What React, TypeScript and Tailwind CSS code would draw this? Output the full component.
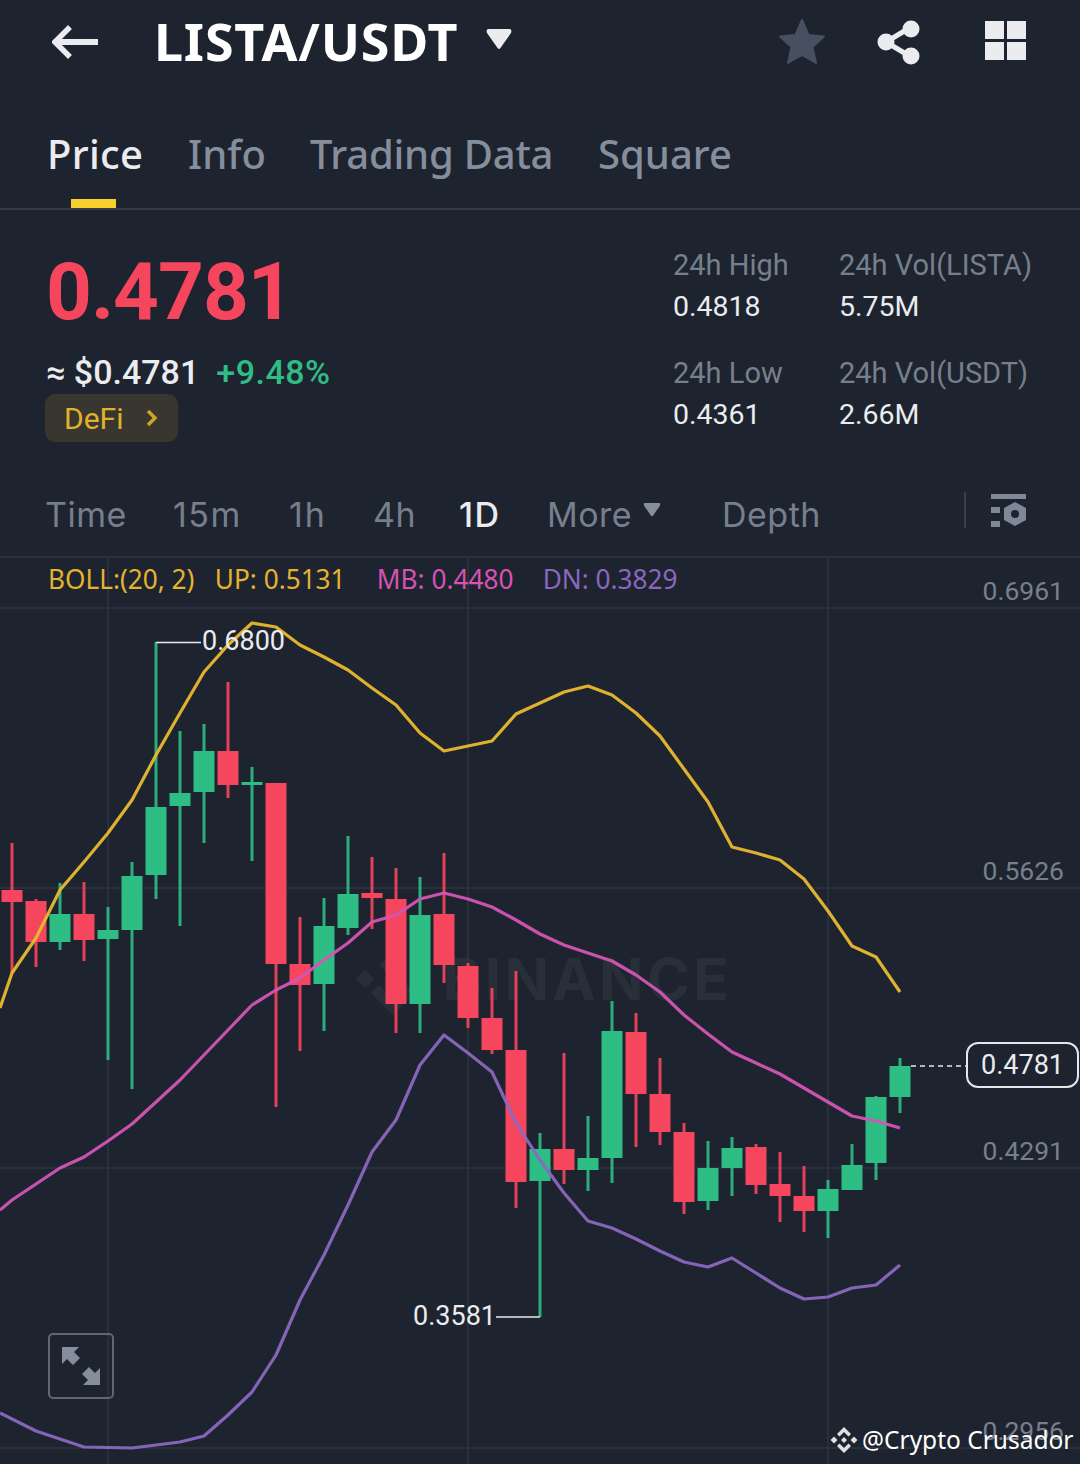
const R = "#f6465d";
const G = "#2ebd85";

// x index from 0 → 12 + 24*i; [wickTop, wickBottom, bodyTop, bodyBottom, up]
const candles: [number, number, number, number, number][] = [
  [843, 973, 890, 902, 0],
  [899, 967, 901, 942, 0],
  [883, 950, 914, 942, 1],
  [882, 961, 914, 940, 0],
  [907, 1060, 930, 939, 1],
  [862, 1089, 876, 930, 1],
  [642, 899, 807, 875, 1],
  [731, 926, 793, 806, 1],
  [724, 843, 751, 792, 1],
  [682, 798, 751, 785, 0],
  [767, 861, 782, 785, 1],
  [783, 1107, 783, 964, 0],
  [917, 1051, 964, 985, 0],
  [898, 1031, 926, 984, 1],
  [836, 935, 894, 928, 1],
  [857, 929, 893, 898, 0],
  [868, 1033, 899, 1004, 0],
  [877, 1033, 915, 1004, 1],
  [853, 983, 914, 965, 0],
  [963, 1028, 966, 1018, 0],
  [988, 1054, 1018, 1050, 0],
  [971, 1208, 1050, 1182, 0],
  [1133, 1317, 1149, 1181, 1],
  [1053, 1184, 1149, 1170, 0],
  [1116, 1191, 1158, 1170, 1],
  [1001, 1183, 1031, 1158, 1],
  [1013, 1147, 1032, 1094, 0],
  [1058, 1145, 1094, 1132, 0],
  [1123, 1214, 1132, 1202, 0],
  [1141, 1210, 1168, 1201, 1],
  [1137, 1196, 1148, 1168, 1],
  [1144, 1194, 1147, 1185, 0],
  [1152, 1222, 1184, 1196, 0],
  [1166, 1232, 1196, 1211, 0],
  [1180, 1238, 1189, 1211, 1],
  [1144, 1190, 1165, 1190, 1],
  [1096, 1180, 1097, 1163, 1],
  [1058, 1113, 1066, 1097, 1],
];

const yellow =
  "0,1008 12,973 36,938 60,890 84,862 108,833 132,800 156,755 180,713 204,672 228,645 252,623 276,627 300,645 324,657 348,670 372,688 396,705 420,733 444,751 468,746 492,741 516,714 540,703 564,692 588,686 612,695 636,713 660,736 684,769 708,802 732,847 756,853 780,860 804,879 828,911 852,946 876,957 900,992";
const magenta =
  "0,1210 12,1200 36,1184 60,1168 84,1157 108,1141 132,1124 156,1102 180,1080 204,1055 228,1030 252,1005 276,990 300,978 324,960 348,943 372,922 396,915 420,899 444,893 468,899 492,907 516,920 540,934 564,945 588,953 612,961 636,975 660,992 684,1015 708,1034 732,1052 756,1063 780,1074 804,1088 828,1102 852,1116 876,1121 900,1128";
const purple =
  "0,1413 36,1431 84,1447 132,1448 180,1442 204,1436 228,1415 252,1392 276,1355 300,1300 324,1255 348,1205 372,1152 396,1120 420,1065 444,1035 468,1053 492,1072 516,1123 540,1160 564,1193 588,1221 612,1228 636,1239 660,1251 684,1262 708,1267 732,1258 756,1273 780,1288 804,1299 828,1297 852,1288 876,1285 900,1265";

function Chart() {
  return (
    <svg className="absolute left-0 top-0" width={1080} height={907} viewBox="0 557 1080 907">
      <g stroke="#2f3540" strokeWidth={1.5}>
        {[608, 888, 1168, 1448].map((y) => (
          <line key={y} x1={0} x2={1080} y1={y} y2={y} />
        ))}
        {[108, 468, 828].map((x) => (
          <line key={x} x1={x} x2={x} y1={557} y2={1464} />
        ))}
      </g>
      <g fill="#292f39">
        <path d="M393 951l14 14-8 8-6-6-6 6-8-8zM365 970l9 9-9 9-9-9zM393 970l9 9-9 9-9-9zM420 970l9 9-9 9-9-9zM379 985l14 14 14-14 8 8-22 22-22-22z" />
      </g>
      {candles.map((c, i) => {
        const x = 12 + 24 * i;
        const col = c[4] ? G : R;
        return (
          <g key={i}>
            <rect x={x - 1.5} y={c[0]} width={3} height={c[1] - c[0]} fill={col} opacity={0.9} />
            <rect x={x - 10.5} y={c[2]} width={21} height={c[3] - c[2]} fill={col} />
          </g>
        );
      })}
      <g fill="none" strokeWidth={3.2} strokeLinejoin="round">
        <polyline points={yellow} stroke="#e9b92e" strokeOpacity={0.95} />
        <polyline points={magenta} stroke="#d455b5" strokeOpacity={0.95} />
        <polyline points={purple} stroke="#8b68c0" strokeOpacity={0.95} />
      </g>
      <g fill="none" stroke="#e8eaee" strokeWidth={1.5}>
        <polyline points="156,642.5 201,642.5" />
        <polyline points="496,1317 540,1317" />
        <line x1={911} x2={966} y1={1066} y2={1066} strokeDasharray="5 4" />
      </g>
    </svg>
  );
}

function Caret({ className }: { className: string }) {
  return (
    <svg className={className} viewBox="0 0 28 22">
      <path d="M1 2q0-2 2-2h22q2 0 2 2t-1 3L15.5 20q-1.500 2-3 0L2 5q-1-1-1-3z" fill="currentColor" />
    </svg>
  );
}

export default function App() {
  return (
    <div className="w-[1080px] h-[1464px] overflow-hidden bg-[#1e242f] text-[#eaecef] font-['Noto_Sans',sans-serif]">
      {/* Header */}
      <div className="h-[84px] flex items-center">
        <svg className="ml-[52px] w-[46px] h-[36px]" viewBox="0 0 46 36" fill="none">
          <path d="M18 3L3 18l15 15" stroke="#eaecef" strokeWidth={5.500} />
          <path d="M4 18h42" stroke="#eaecef" strokeWidth={6} />
        </svg>
        <div className="ml-[56px] -mt-[2px] w-[331px] font-bold text-[52px] leading-none tracking-[0.8px] text-white whitespace-nowrap">
          LISTA/USDT
        </div>
        <Caret className="w-[28px] h-[21px] -mt-[6px] text-[#eaecef]" />
        <svg className="ml-[266px] w-[46px] h-[46px]" viewBox="0 0 46 46">
          <path d="M23 1l6.500 15 15.500 1.500-11.500 10.500 3.500 16L23 36l-14 8 3.500-16L1 17.500 16.500 16z" fill="#475061" stroke="#475061" strokeLinejoin="round" strokeWidth={2} />
        </svg>
        <svg className="ml-[51px] w-[46px] h-[46px]" viewBox="0 0 46 46">
          <path d="M35 8L10 23l25 15" stroke="#eaecef" strokeWidth={5} fill="none" />
          <circle cx={35} cy={10} r={8.500} fill="#eaecef" />
          <circle cx={10} cy={23} r={8.500} fill="#eaecef" />
          <circle cx={35} cy={37} r={8.500} fill="#eaecef" />
        </svg>
        <div className="ml-[63px] -mt-[4px] grid grid-cols-2 gap-[3px] w-[41px]">
          <div className="h-[18px] w-[19px] bg-[#eaecef]" />
          <div className="h-[18px] w-[19px] bg-[#eaecef]" />
          <div className="h-[18px] w-[19px] bg-[#eaecef]" />
          <div className="h-[18px] w-[19px] bg-[#eaecef]" />
        </div>
      </div>

      {/* Tabs */}
      <div className="h-[126px] border-b-2 border-[#343a45] flex pl-[47px] items-start text-[40px] leading-none text-[#848e9c] font-medium">
        <div className="mt-[50px] flex flex-col items-start w-[96px]">
          <span className="text-[#eaecef] tracking-[0.3px]">Price</span>
          <div className="ml-[24px] mt-[25px] w-[45px] h-[9px] bg-[#f7d02e]" />
        </div>
        <span className="mt-[50px] ml-[45px] w-[77px] block">Info</span>
        <span className="mt-[50px] ml-[45px] w-[243px] block whitespace-nowrap tracking-[-0.2px]">Trading Data</span>
        <span className="mt-[50px] ml-[45px] block">Square</span>
      </div>

      {/* Stats */}
      <div className="h-[260px] flex font-['Roboto',sans-serif]">
        <div className="w-[673px] pl-[45px] flex flex-col items-start">
          <div className="mt-[36px] pl-[1px] text-[80px] leading-[92px] font-bold text-[#f6465d] tracking-[-1px]">0.4781</div>
          <div className="mt-[14px] pl-[1px] flex items-baseline text-[34px] leading-[40px] font-medium">
            <span className="text-[#eaecef]">≈ $0.4781</span>
            <span className="ml-[17px] text-[#2ebd85] tracking-[0.5px]">+9.48%</span>
          </div>
          <div className="mt-[2px] w-[133px] h-[48px] rounded-[10px] bg-[#38362e] flex items-center pl-[19px] text-[#e0b22a] text-[30px]">
            DeFi
            <svg className="ml-[22px] w-[14px] h-[18px]" viewBox="0 0 14 18" fill="none">
              <path d="M3 2l7 7-7 7" stroke="#d0a224" strokeWidth={3.5} />
            </svg>
          </div>
        </div>
        <div className="pt-[37px] grid grid-cols-[166px_auto] grid-rows-[108px_108px] text-[29px] leading-[36px] text-[#eaecef]">
          {[
            ["24h High", "0.4818"],
            ["24h Vol(LISTA)", "5.75M"],
            ["24h Low", "0.4361"],
            ["24h Vol(USDT)", "2.66M"],
          ].map(([a, b]) => (
            <div key={a} className="flex flex-col gap-[6px]">
              <span className="text-[#767f8d]">{a}</span>
              <span className="text-[28.5px]">{b}</span>
            </div>
          ))}
        </div>
      </div>

      {/* Intervals */}
      <div className="h-[88px] pt-[2px] border-b-2 border-[#2b313b] flex items-center font-['Inter',sans-serif] text-[34px] text-[#767f8d] pl-[45px] tracking-[0.5px]">
        <span className="w-[128px]">Time</span>
        <span className="w-[116px] tracking-[1.5px]">15m</span>
        <span className="w-[84px] tracking-[2px]">1h</span>
        <span className="w-[86px]">4h</span>
        <span className="w-[88px] text-[#eaecef] font-medium tracking-[1.5px]">1D</span>
        <span className="w-[95px]">More</span>
        <Caret className="w-[20px] h-[14px] -mt-[8px] text-[#848e9c]" />
        <span className="ml-[60px] w-[242px]">Depth</span>
        <div className="w-[2px] h-[36px] -mt-[8px] bg-[#3a404b]" />
        <svg className="ml-[24px] -mt-[4px] w-[38px] h-[38px]" viewBox="0 0 38 38" fill="#7f8896">
          <rect x={1} y={1} width={35} height={5} />
          <rect x={1} y={14} width={9} height={6} />
          <rect x={1} y={28} width={9} height={6} />
          <path fillRule="evenodd" d="M25 9l11 6v12l-11 6-11-6V15zM25 17a4 4 0 100 8 4 4 0 000-8z" />
        </svg>
      </div>

      {/* Chart */}
      <div className="relative h-[907px] -mt-[1px]">
        <div className="absolute left-[443px] top-[387px] text-[58px] leading-[70px] font-bold font-['Inter',sans-serif] text-[#292f39] tracking-[3.5px]">
          BINANCE
        </div>
        <Chart />
        <div className="absolute left-[48px] top-[4px] flex text-[27px] leading-[36px] whitespace-nowrap scale-x-[0.97] origin-left">
          <span className="text-[#e5b32e] w-[172px]">BOLL:(20, 2)</span>
          <span className="text-[#e5b32e] w-[167px]">UP: 0.5131</span>
          <span className="text-[#d653b4] w-[171px]">MB: 0.4480</span>
          <span className="text-[#8b66bf]">DN: 0.3829</span>
        </div>
        {[
          ["0.6961", 16],
          ["0.5626", 296],
          ["0.4291", 576],
          ["0.2956", 856],
        ].map(([t, y]) => (
          <div key={t} className="absolute right-[16px] text-[26.5px] leading-[36px] font-['Roboto',sans-serif] text-[#767f8d]" style={{ top: Number(y) }}>
            {t}
          </div>
        ))}
        <div className="absolute left-[202px] top-[66px] text-[27px] leading-[36px] font-['Roboto',sans-serif] text-[#eaecef]">0.6800</div>
        <div className="absolute left-[413px] top-[741px] text-[27px] leading-[36px] font-['Roboto',sans-serif] text-[#eaecef]">0.3581</div>
        <div className="absolute left-[966px] top-[485px] w-[113px] h-[46px] border-2 border-[#e4e6ea] rounded-[12px] bg-[#1e242f] flex items-center justify-center text-[27px] font-['Roboto',sans-serif] text-[#eaecef]">
          0.4781
        </div>
        <div className="absolute left-[48px] top-[776px] w-[66px] h-[66px] rounded-[5px] border-2 border-[#5f6774] flex items-center justify-center">
          <svg className="w-[40px] h-[40px]" viewBox="0 0 40 40" fill="#848e9c">
            <path d="M1 1h17l-5 5 6 6-7 7-6-6-5 5zM39 39H22l5-5-6-6 7-7 6 6 5-5z" />
          </svg>
        </div>
        <div className="absolute left-[830px] top-[865px] flex items-center gap-[4px] text-[24.5px] leading-[36px] text-white whitespace-nowrap">
          <svg className="w-[28px] h-[28px]" viewBox="0 0 28 28" fill="#dfe1e5">
            <path d="M14 1l7 7-2.500 2.500L14 6 9.500 10.500 7 8zM14 27l7-7-2.500-2.500L14 22l-4.500-4.500L7 20zM4 10.500L7.500 14 4 17.500.5 14zM24 10.500l3.500 3.500-3.500 3.500-3.500-3.500zM14 11l3 3-3 3-3-3z" />
          </svg>
          <span>@Crypto Crusador</span>
        </div>
      </div>
    </div>
  );
}
